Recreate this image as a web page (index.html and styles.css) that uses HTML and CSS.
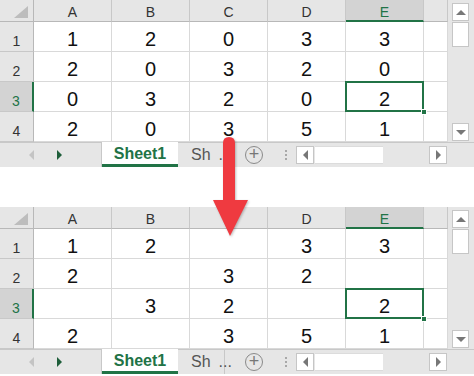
FILE: index.html
```html
<!DOCTYPE html>
<html>
	<head>
		<title>Excel - Blank cells</title>
		<link rel="stylesheet" href="styles.css">
	</head>
	<body>
		<div class="page">

			<div class="sheet">
				<div class="main">
					<div class="grid">
						<div class="corner"><svg width="14" height="12" viewBox="0 0 14 12"><polygon points="14,0 14,12 0,12" fill="#bdbdbd"/></svg></div>
						<div class="colhead">A</div><div class="colhead">B</div><div class="colhead">C</div><div class="colhead">D</div><div class="colhead sel">E</div><div class="colhead"></div>

						<div class="rowhead">1</div><div class="cell">1</div><div class="cell">2</div><div class="cell">0</div><div class="cell">3</div><div class="cell">3</div><div class="cell"></div>
						<div class="rowhead">2</div><div class="cell">2</div><div class="cell">0</div><div class="cell">3</div><div class="cell">2</div><div class="cell">0</div><div class="cell"></div>
						<div class="rowhead sel">3</div><div class="cell">0</div><div class="cell">3</div><div class="cell">2</div><div class="cell">0</div><div class="cell active">2</div><div class="cell"></div>
						<div class="rowhead">4</div><div class="cell">2</div><div class="cell">0</div><div class="cell">3</div><div class="cell">5</div><div class="cell">1</div><div class="cell"></div>
					</div>
					<div class="vscroll">
						<div class="sbox up"><span class="tri-up"></span></div>
						<div class="sbox vthumb"></div>
						<div class="vtrack"></div>
						<div class="sbox down"><span class="tri-down"></span></div>
					</div>
				</div>
				<div class="tabbar">
					<div class="nav">
						<span class="tri-left light"></span>
						<span class="tri-right green"></span>
					</div>
					<div class="tab current">Sheet1</div>
					<div class="tab other">Sh<span class="dots">...</span></div>
					<div class="addsheet"><span class="plus">+</span></div>
					<div class="grip"><i></i><i></i><i></i></div>
					<div class="hscroll">
						<div class="sbox hbtn"><span class="tri-left"></span></div>
						<div class="hthumb"></div>
						<div class="htrack"></div>
						<div class="sbox hbtn"><span class="tri-right"></span></div>
					</div>
				</div>
			</div>

			<div class="gap"></div>

			<div class="sheet">
				<div class="main">
					<div class="grid">
						<div class="corner"><svg width="14" height="12" viewBox="0 0 14 12"><polygon points="14,0 14,12 0,12" fill="#bdbdbd"/></svg></div>
						<div class="colhead">A</div><div class="colhead">B</div><div class="colhead">C</div><div class="colhead">D</div><div class="colhead sel">E</div><div class="colhead"></div>

						<div class="rowhead">1</div><div class="cell">1</div><div class="cell">2</div><div class="cell"></div><div class="cell">3</div><div class="cell">3</div><div class="cell"></div>
						<div class="rowhead">2</div><div class="cell">2</div><div class="cell"></div><div class="cell">3</div><div class="cell">2</div><div class="cell"></div><div class="cell"></div>
						<div class="rowhead sel">3</div><div class="cell"></div><div class="cell">3</div><div class="cell">2</div><div class="cell"></div><div class="cell active">2</div><div class="cell"></div>
						<div class="rowhead">4</div><div class="cell">2</div><div class="cell"></div><div class="cell">3</div><div class="cell">5</div><div class="cell">1</div><div class="cell"></div>
					</div>
					<div class="vscroll">
						<div class="sbox up"><span class="tri-up"></span></div>
						<div class="sbox vthumb"></div>
						<div class="vtrack"></div>
						<div class="sbox down"><span class="tri-down"></span></div>
					</div>
				</div>
				<div class="tabbar">
					<div class="nav">
						<span class="tri-left light"></span>
						<span class="tri-right green"></span>
					</div>
					<div class="tab current">Sheet1</div>
					<div class="tab other">Sh<span class="dots">...</span></div>
					<div class="addsheet"><span class="plus">+</span></div>
					<div class="grip"><i></i><i></i><i></i></div>
					<div class="hscroll">
						<div class="sbox hbtn"><span class="tri-left"></span></div>
						<div class="hthumb"></div>
						<div class="htrack"></div>
						<div class="sbox hbtn"><span class="tri-right"></span></div>
					</div>
				</div>
			</div>

			<!-- arrow sits over both sheets -->
			<svg class="arrow" width="44" height="106" viewBox="0 0 44 106">
				<path d="M13 9 Q13 3 19 3 Q25 3 25 9 L25 66 L38 66 L20 102 L3 66 L13 66 Z" fill="#ef3a40"/>
			</svg>

		</div>
	</body>
</html>
```

FILE: styles.css
```css
body {
	margin: 0;
	background-color: #ffffff;
	font-family: "Liberation Sans", Arial, sans-serif;
}

.page {
	position: relative;
	width: 474px;
	height: 376px;
	overflow: hidden;
}

.gap {
	height: 40px;
}

.main {
	display: flex;
}

.grid {
	display: grid;
	grid-template-columns: 34px repeat(5, 78px) 24px;
	grid-template-rows: 22px repeat(4, 30px);
	width: 448px;
}

.grid > div {
	box-sizing: border-box;
}

.corner {
	background-color: #e6e6e6;
	border-right: 1px solid #b8b8b8;
	border-bottom: 1px solid #b8b8b8;
	display: flex;
	align-items: flex-end;
	justify-content: flex-end;
	padding: 0 5px 3px 0;
}

.colhead {
	background-color: #e6e6e6;
	border-right: 1px solid #c8c8c8;
	border-bottom: 1px solid #b8b8b8;
	color: #333333;
	font-size: 14px;
	text-align: center;
	line-height: 22px;
	padding-top: 1px;
}

.colhead.sel {
	background-color: #d3d3d3;
	color: #217346;
	border-bottom: 2px solid #217346;
}

.rowhead {
	background-color: #e6e6e6;
	border-right: 1px solid #b8b8b8;
	border-bottom: 1px solid #c8c8c8;
	color: #333333;
	font-size: 14px;
	display: flex;
	align-items: flex-end;
	justify-content: center;
	padding-bottom: 2px;
}

.rowhead.sel {
	background-color: #d3d3d3;
	color: #217346;
	border-right: 2px solid #217346;
}

.cell {
	border-right: 1px solid #d9d9d9;
	border-bottom: 1px solid #d9d9d9;
	color: #111111;
	font-size: 20px;
	display: flex;
	align-items: center;
	justify-content: center;
	padding-top: 5px;
}

.cell.active {
	position: relative;
}

.cell.active::after {
	content: "";
	position: absolute;
	left: -1px;
	top: -1px;
	right: -1px;
	bottom: -1px;
	border: 2px solid #217346;
}

.cell.active::before {
	content: "";
	position: absolute;
	right: -4px;
	bottom: -4px;
	width: 6px;
	height: 6px;
	background-color: #217346;
	border: 1px solid #ffffff;
	box-sizing: border-box;
	z-index: 1;
}

.vscroll {
	width: 26px;
	background-color: #e6e6e6;
	display: flex;
	flex-direction: column;
	padding: 3px 5px 1px 4px;
	box-sizing: border-box;
}

.sbox {
	background-color: #ffffff;
	border: 1px solid #c6c6c6;
	box-sizing: border-box;
	display: flex;
	align-items: center;
	justify-content: center;
}

.up, .down {
	height: 18px;
}

.vthumb {
	height: 25px;
	margin-top: 1px;
}

.vtrack {
	flex: 1;
}

.tri-up {
	width: 0;
	height: 0;
	border-left: 5px solid transparent;
	border-right: 5px solid transparent;
	border-bottom: 5px solid #777777;
}

.tri-down {
	width: 0;
	height: 0;
	border-left: 5px solid transparent;
	border-right: 5px solid transparent;
	border-top: 5px solid #777777;
}

.tri-left {
	width: 0;
	height: 0;
	border-top: 5px solid transparent;
	border-bottom: 5px solid transparent;
	border-right: 5px solid #777777;
}

.tri-right {
	width: 0;
	height: 0;
	border-top: 5px solid transparent;
	border-bottom: 5px solid transparent;
	border-left: 5px solid #777777;
}

.tri-left.light {
	border-right-color: #c4c4c4;
}

.tri-right.green {
	border-left-color: #1e5e3a;
}

.tabbar {
	height: 25px;
	background-color: #e6e6e6;
	border-top: 1px solid #c8c8c8;
	box-sizing: border-box;
	display: flex;
	align-items: stretch;
}

.nav {
	width: 102px;
	display: flex;
	align-items: center;
	gap: 23px;
	padding-left: 29px;
	box-sizing: border-box;
	border-right: 1px solid #c8c8c8;
}

.tab {
	box-sizing: border-box;
	display: flex;
	align-items: center;
	font-size: 16px;
}

.tab.current {
	width: 76px;
	background-color: #ffffff;
	color: #217346;
	font-weight: bold;
	justify-content: center;
	border-bottom: 3px solid #217346;
	margin-top: -1px;
	padding-top: 2px;
}

.tab.other {
	width: 47px;
	color: #555555;
	padding-left: 13px;
	border-right: 1px solid #c8c8c8;
	white-space: nowrap;
}

.dots {
	margin-left: 8px;
}

.addsheet {
	width: 52px;
	display: flex;
	align-items: center;
	justify-content: center;
	padding-left: 6px;
	box-sizing: border-box;
}

.plus {
	width: 18px;
	height: 18px;
	border: 1.5px solid #8a8a8a;
	border-radius: 50%;
	box-sizing: border-box;
	color: #777777;
	font-size: 18px;
	line-height: 14px;
	text-align: center;
}

.grip {
	width: 18px;
	display: flex;
	flex-direction: column;
	align-items: center;
	justify-content: center;
	gap: 2px;
}

.grip i {
	width: 2px;
	height: 2px;
	background-color: #a8a8a8;
}

.hscroll {
	flex: 1;
	display: flex;
	align-items: center;
	padding: 0 27px 0 1px;
}

.hbtn {
	width: 18px;
	height: 18px;
}

.hthumb {
	width: 68px;
	height: 18px;
	background-color: #ffffff;
	border-top: 1px solid #dcdcdc;
	border-bottom: 1px solid #dcdcdc;
	box-sizing: border-box;
	margin-left: 1px;
}

.htrack {
	flex: 1;
}

.arrow {
	position: absolute;
	left: 210px;
	top: 134px;
	filter: drop-shadow(1px 1px 1px rgba(0, 0, 0, 0.25));
}
```
